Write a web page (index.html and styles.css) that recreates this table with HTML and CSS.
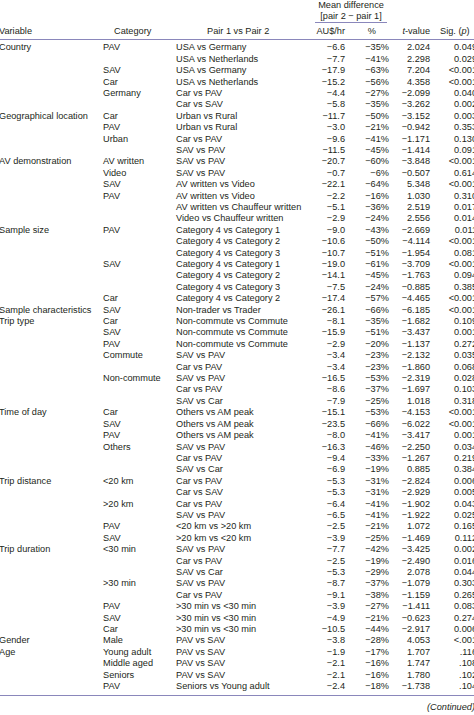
FILE: index.html
```html
<!DOCTYPE html>
<html>
<head>
<meta charset="utf-8">
<link rel="stylesheet" href="styles.css">
</head>
<body>
<div class="page">
<table class="stats">
<colgroup>
<col class="c-var"><col class="c-cat"><col class="c-pair"><col class="c-au"><col class="c-pct"><col class="c-t"><col class="c-sig">
</colgroup>
<thead>
<tr class="h-top">
<th></th><th></th><th></th>
<th colspan="2" class="md"><div class="md-box">Mean difference<br>[pair 2 − pair 1]</div></th>
<th></th><th></th>
</tr>
<tr class="h-cols">
<th class="h-var">Variable</th>
<th class="h-cat">Category</th>
<th class="h-pair">Pair 1 vs Pair 2</th>
<th class="num">AU$/hr</th>
<th class="num h-pct">%</th>
<th class="num"><i>t</i>-value</th>
<th class="h-sig">Sig. (<i>p</i>)</th>
</tr>
</thead>
<tbody>
<tr class="first"><td>Country</td><td>PAV</td><td>USA vs Germany</td><td class="num">−6.6</td><td class="num">−35%</td><td class="num">2.024</td><td class="num">0.049</td></tr>
<tr><td></td><td></td><td>USA vs Netherlands</td><td class="num">−7.7</td><td class="num">−41%</td><td class="num">2.298</td><td class="num">0.029</td></tr>
<tr><td></td><td>SAV</td><td>USA vs Germany</td><td class="num">−17.9</td><td class="num">−63%</td><td class="num">7.204</td><td class="num">&lt;0.001</td></tr>
<tr><td></td><td>Car</td><td>USA vs Netherlands</td><td class="num">−15.2</td><td class="num">−56%</td><td class="num">4.358</td><td class="num">&lt;0.001</td></tr>
<tr><td></td><td>Germany</td><td>Car vs PAV</td><td class="num">−4.4</td><td class="num">−27%</td><td class="num">−2.099</td><td class="num">0.040</td></tr>
<tr><td></td><td></td><td>Car vs SAV</td><td class="num">−5.8</td><td class="num">−35%</td><td class="num">−3.262</td><td class="num">0.002</td></tr>
<tr><td>Geographical location</td><td>Car</td><td>Urban vs Rural</td><td class="num">−11.7</td><td class="num">−50%</td><td class="num">−3.152</td><td class="num">0.003</td></tr>
<tr><td></td><td>PAV</td><td>Urban vs Rural</td><td class="num">−3.0</td><td class="num">−21%</td><td class="num">−0.942</td><td class="num">0.353</td></tr>
<tr><td></td><td>Urban</td><td>Car vs PAV</td><td class="num">−9.6</td><td class="num">−41%</td><td class="num">−1.171</td><td class="num">0.130</td></tr>
<tr><td></td><td></td><td>SAV vs PAV</td><td class="num">−11.5</td><td class="num">−45%</td><td class="num">−1.414</td><td class="num">0.091</td></tr>
<tr><td>AV demonstration</td><td>AV written</td><td>SAV vs PAV</td><td class="num">−20.7</td><td class="num">−60%</td><td class="num">−3.848</td><td class="num">&lt;0.001</td></tr>
<tr><td></td><td>Video</td><td>SAV vs PAV</td><td class="num">−0.7</td><td class="num">−6%</td><td class="num">−0.507</td><td class="num">0.614</td></tr>
<tr><td></td><td>SAV</td><td>AV written vs Video</td><td class="num">−22.1</td><td class="num">−64%</td><td class="num">5.348</td><td class="num">&lt;0.001</td></tr>
<tr><td></td><td>PAV</td><td>AV written vs Video</td><td class="num">−2.2</td><td class="num">−16%</td><td class="num">1.030</td><td class="num">0.310</td></tr>
<tr><td></td><td></td><td>AV written vs Chauffeur written</td><td class="num">−5.1</td><td class="num">−36%</td><td class="num">2.519</td><td class="num">0.017</td></tr>
<tr><td></td><td></td><td>Video vs Chauffeur written</td><td class="num">−2.9</td><td class="num">−24%</td><td class="num">2.556</td><td class="num">0.014</td></tr>
<tr><td>Sample size</td><td>PAV</td><td>Category 4 vs Category 1</td><td class="num">−9.0</td><td class="num">−43%</td><td class="num">−2.669</td><td class="num">0.011</td></tr>
<tr><td></td><td></td><td>Category 4 vs Category 2</td><td class="num">−10.6</td><td class="num">−50%</td><td class="num">−4.114</td><td class="num">&lt;0.001</td></tr>
<tr><td></td><td></td><td>Category 4 vs Category 3</td><td class="num">−10.7</td><td class="num">−51%</td><td class="num">−1.954</td><td class="num">0.081</td></tr>
<tr><td></td><td>SAV</td><td>Category 4 vs Category 1</td><td class="num">−19.0</td><td class="num">−61%</td><td class="num">−3.709</td><td class="num">&lt;0.001</td></tr>
<tr><td></td><td></td><td>Category 4 vs Category 2</td><td class="num">−14.1</td><td class="num">−45%</td><td class="num">−1.763</td><td class="num">0.094</td></tr>
<tr><td></td><td></td><td>Category 4 vs Category 3</td><td class="num">−7.5</td><td class="num">−24%</td><td class="num">−0.885</td><td class="num">0.385</td></tr>
<tr><td></td><td>Car</td><td>Category 4 vs Category 2</td><td class="num">−17.4</td><td class="num">−57%</td><td class="num">−4.465</td><td class="num">&lt;0.001</td></tr>
<tr><td>Sample characteristics</td><td>SAV</td><td>Non-trader vs Trader</td><td class="num">−26.1</td><td class="num">−66%</td><td class="num">−6.185</td><td class="num">&lt;0.001</td></tr>
<tr><td>Trip type</td><td>Car</td><td>Non-commute vs Commute</td><td class="num">−8.1</td><td class="num">−35%</td><td class="num">−1.682</td><td class="num">0.109</td></tr>
<tr><td></td><td>SAV</td><td>Non-commute vs Commute</td><td class="num">−15.9</td><td class="num">−51%</td><td class="num">−3.437</td><td class="num">0.001</td></tr>
<tr><td></td><td>PAV</td><td>Non-commute vs Commute</td><td class="num">−2.9</td><td class="num">−20%</td><td class="num">−1.137</td><td class="num">0.272</td></tr>
<tr><td></td><td>Commute</td><td>SAV vs PAV</td><td class="num">−3.4</td><td class="num">−23%</td><td class="num">−2.132</td><td class="num">0.035</td></tr>
<tr><td></td><td></td><td>Car vs PAV</td><td class="num">−3.4</td><td class="num">−23%</td><td class="num">−1.860</td><td class="num">0.068</td></tr>
<tr><td></td><td>Non-commute</td><td>SAV vs PAV</td><td class="num">−16.5</td><td class="num">−53%</td><td class="num">−2.319</td><td class="num">0.028</td></tr>
<tr><td></td><td></td><td>Car vs PAV</td><td class="num">−8.6</td><td class="num">−37%</td><td class="num">−1.697</td><td class="num">0.103</td></tr>
<tr><td></td><td></td><td>SAV vs Car</td><td class="num">−7.9</td><td class="num">−25%</td><td class="num">1.018</td><td class="num">0.318</td></tr>
<tr><td>Time of day</td><td>Car</td><td>Others vs AM peak</td><td class="num">−15.1</td><td class="num">−53%</td><td class="num">−4.153</td><td class="num">&lt;0.001</td></tr>
<tr><td></td><td>SAV</td><td>Others vs AM peak</td><td class="num">−23.5</td><td class="num">−66%</td><td class="num">−6.022</td><td class="num">&lt;0.001</td></tr>
<tr><td></td><td>PAV</td><td>Others vs AM peak</td><td class="num">−8.0</td><td class="num">−41%</td><td class="num">−3.417</td><td class="num">0.001</td></tr>
<tr><td></td><td>Others</td><td>SAV vs PAV</td><td class="num">−16.3</td><td class="num">−46%</td><td class="num">−2.250</td><td class="num">0.034</td></tr>
<tr><td></td><td></td><td>Car vs PAV</td><td class="num">−9.4</td><td class="num">−33%</td><td class="num">−1.267</td><td class="num">0.219</td></tr>
<tr><td></td><td></td><td>SAV vs Car</td><td class="num">−6.9</td><td class="num">−19%</td><td class="num">0.885</td><td class="num">0.384</td></tr>
<tr><td>Trip distance</td><td>&lt;20 km</td><td>Car vs PAV</td><td class="num">−5.3</td><td class="num">−31%</td><td class="num">−2.824</td><td class="num">0.006</td></tr>
<tr><td></td><td></td><td>Car vs SAV</td><td class="num">−5.3</td><td class="num">−31%</td><td class="num">−2.929</td><td class="num">0.005</td></tr>
<tr><td></td><td>&gt;20 km</td><td>Car vs PAV</td><td class="num">−6.4</td><td class="num">−41%</td><td class="num">−1.902</td><td class="num">0.043</td></tr>
<tr><td></td><td></td><td>SAV vs PAV</td><td class="num">−6.5</td><td class="num">−41%</td><td class="num">−1.922</td><td class="num">0.025</td></tr>
<tr><td></td><td>PAV</td><td>&lt;20 km vs &gt;20 km</td><td class="num">−2.5</td><td class="num">−21%</td><td class="num">1.072</td><td class="num">0.165</td></tr>
<tr><td></td><td>SAV</td><td>&gt;20 km vs &lt;20 km</td><td class="num">−3.9</td><td class="num">−25%</td><td class="num">−1.469</td><td class="num">0.112</td></tr>
<tr><td>Trip duration</td><td>&lt;30 min</td><td>SAV vs PAV</td><td class="num">−7.7</td><td class="num">−42%</td><td class="num">−3.425</td><td class="num">0.002</td></tr>
<tr><td></td><td></td><td>Car vs PAV</td><td class="num">−2.5</td><td class="num">−19%</td><td class="num">−2.490</td><td class="num">0.016</td></tr>
<tr><td></td><td></td><td>SAV vs Car</td><td class="num">−5.3</td><td class="num">−29%</td><td class="num">2.078</td><td class="num">0.044</td></tr>
<tr><td></td><td>&gt;30 min</td><td>SAV vs PAV</td><td class="num">−8.7</td><td class="num">−37%</td><td class="num">−1.079</td><td class="num">0.303</td></tr>
<tr><td></td><td></td><td>Car vs PAV</td><td class="num">−9.1</td><td class="num">−38%</td><td class="num">−1.159</td><td class="num">0.265</td></tr>
<tr><td></td><td>PAV</td><td>&gt;30 min vs &lt;30 min</td><td class="num">−3.9</td><td class="num">−27%</td><td class="num">−1.411</td><td class="num">0.083</td></tr>
<tr><td></td><td>SAV</td><td>&gt;30 min vs &lt;30 min</td><td class="num">−4.9</td><td class="num">−21%</td><td class="num">−0.623</td><td class="num">0.274</td></tr>
<tr><td></td><td>Car</td><td>&gt;30 min vs &lt;30 min</td><td class="num">−10.5</td><td class="num">−44%</td><td class="num">−2.917</td><td class="num">0.006</td></tr>
<tr><td>Gender</td><td>Male</td><td>PAV vs SAV</td><td class="num">−3.8</td><td class="num">−28%</td><td class="num">4.053</td><td class="num">&lt;.001</td></tr>
<tr><td>Age</td><td>Young adult</td><td>PAV vs SAV</td><td class="num">−1.9</td><td class="num">−17%</td><td class="num">1.707</td><td class="num">.116</td></tr>
<tr><td></td><td>Middle aged</td><td>PAV vs SAV</td><td class="num">−2.1</td><td class="num">−16%</td><td class="num">1.747</td><td class="num">.108</td></tr>
<tr><td></td><td>Seniors</td><td>PAV vs SAV</td><td class="num">−2.1</td><td class="num">−16%</td><td class="num">1.780</td><td class="num">.102</td></tr>
<tr class="last"><td></td><td>PAV</td><td>Seniors vs Young adult</td><td class="num">−2.4</td><td class="num">−18%</td><td class="num">−1.738</td><td class="num">.104</td></tr>
</tbody>
</table>
<p class="cont"><i>(Continued)</i></p>
</div>
</body>
</html>
```
FILE: styles.css
```css
html, body {
  margin: 0;
  padding: 0;
  background: #ffffff;
  overflow: hidden;
}

.page {
  width: 478px;
  margin-left: -1px;
  font-family: "Liberation Sans", Arial, sans-serif;
  font-size: 9.2px;
  color: #231f20;
}

.stats {
  border-collapse: collapse;
  table-layout: fixed;
  width: 478px;
}

.c-var { width: 104px; }
.c-cat { width: 73px; }
.c-pair { width: 129px; }
.c-au { width: 40px; }
.c-pct { width: 44px; }
.c-t { width: 41px; }
.c-sig { width: 47px; }

.stats th,
.stats td {
  padding: 0;
  line-height: 11.4px;
  height: 11.4px;
  white-space: nowrap;
  text-align: left;
  font-weight: normal;
  vertical-align: middle;
}

.stats .num {
  text-align: right;
}

.h-top th {
  vertical-align: bottom;
}

.md {
  padding: 0;
}

.md-box {
  margin-left: 10px;
  margin-right: 2px;
  text-align: center;
  line-height: 10.5px;
  padding-bottom: 1px;
  border-bottom: 1px solid #8a87bb;
}

.h-cols th {
  padding-top: 3.3px;
  padding-bottom: 1.3px;
  border-bottom: 1px solid #8a87bb;
}

.h-cat { padding-left: 11px !important; }
.h-pair { padding-left: 31px !important; }
.stats .h-pct { padding-right: 13px; text-align: right; }
.h-sig { padding-left: 10px !important; }

.first td {
  padding-top: 2.3px;
}

.last td {
  padding-bottom: 3px;
}

.stats tbody tr.last {
  border-bottom: 1px solid #8a87bb;
}

.cont {
  margin: 6px 0 0 0;
  padding-right: 2px;
  text-align: right;
  line-height: 11.4px;
}
```
